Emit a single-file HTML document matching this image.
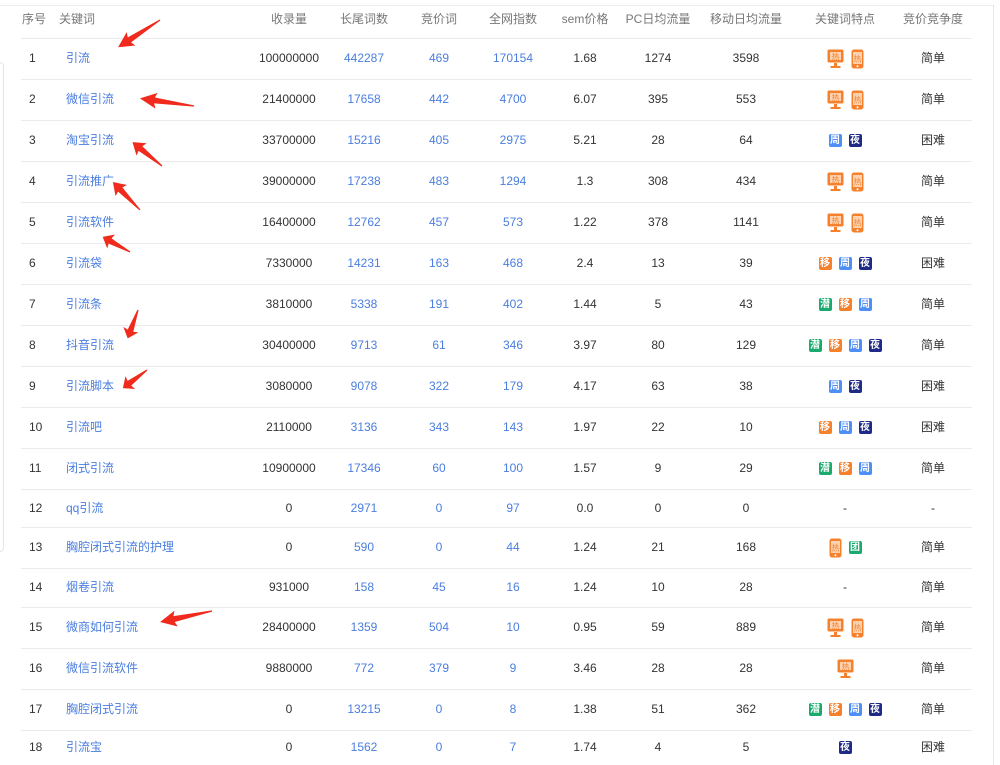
<!DOCTYPE html>
<html><head><meta charset="utf-8"><style>
body{margin:0;width:1000px;height:765px;background:#fff;position:relative;overflow:hidden;font-family:"Liberation Sans","Noto Sans CJK SC",sans-serif;font-size:12px;color:#333}
.top{position:absolute;left:0;top:5px;width:993px;height:1px;background:#ececec}
.rv{position:absolute;left:993px;top:5px;width:1px;height:760px;background:#e6e6e6}
.lp{position:absolute;left:-6px;top:62px;width:8px;height:488px;border:1px solid #e4e4e4;border-radius:4px}
.ln{position:absolute;left:21px;width:951px;height:1px;background:#ebebeb}
.r{position:absolute;left:0;width:1000px}
.c{position:absolute;top:0;height:100%;width:110px;text-align:center;white-space:nowrap}
.s{left:29px;text-align:left}
.k{left:66px;text-align:left;color:#4a7ee0;width:200px}
.b{color:#4a7ee0}
.h{color:#777}
.ic{display:flex;justify-content:center;align-items:center;gap:7px;height:100%;line-height:normal}
.ic svg{display:block}
.bd{display:inline-block;width:13px;height:13px;border-radius:2px;color:#fff;font-size:10px;font-weight:bold;line-height:13px;text-align:center}
.g{background:#1aaa6d}.o{background:#f5812d}.u{background:#4e8ef7}.n{background:#1f2a86}
</style></head><body>
<div class="top"></div><div class="rv"></div><div class="lp"></div>
<svg width="0" height="0" style="position:absolute"><defs>
<symbol id="mon" viewBox="0 0 17 20"><rect x="0.5" y="0.5" width="16" height="13" rx="1.5" fill="#f5812d"/><rect x="3" y="3" width="11" height="8" fill="#fbd3b3"/><text x="8.5" y="10.5" font-size="8" text-anchor="middle" fill="#f5812d" font-family="Noto Sans CJK SC">热</text><rect x="7" y="14" width="3" height="3" fill="#f5812d"/><rect x="3.5" y="17" width="10" height="2" fill="#f5812d"/></symbol>
<symbol id="ph" viewBox="0 0 13 20"><rect x="0.5" y="0.5" width="12" height="19" rx="2.5" fill="#f5812d"/><rect x="2" y="3" width="9" height="12" fill="#fbd3b3"/><text x="6.5" y="12.5" font-size="8" text-anchor="middle" fill="#f5812d" font-family="Noto Sans CJK SC">热</text><circle cx="6.5" cy="17.3" r="1" fill="#fff"/></symbol>
</defs></svg>
<div id="t"></div>
<script>
var H=[5,38,79,120,161,202,243,284,325,366,407,448,489,527,568,607,648,689,730,765];
var cx=[289,364,439,513,585,658,746,845,933];
var M='<svg width="17" height="20"><use href="#mon"/></svg>',P='<svg width="13" height="20"><use href="#ph"/></svg>';
function B(c,t){return '<span class="bd '+c+'">'+t+'</span>'}
var HP=M+P,ZY=B('u','周')+B('n','夜'),YZY=B('o','移')+B('u','周')+B('n','夜'),QYZ=B('g','潜')+B('o','移')+B('u','周'),ALL=B('g','潜')+B('o','移')+B('u','周')+B('n','夜');
var D=[
['1','引流','100000000','442287','469','170154','1.68','1274','3598',HP,'简单'],
['2','微信引流','21400000','17658','442','4700','6.07','395','553',HP,'简单'],
['3','淘宝引流','33700000','15216','405','2975','5.21','28','64',ZY,'困难'],
['4','引流推广','39000000','17238','483','1294','1.3','308','434',HP,'简单'],
['5','引流软件','16400000','12762','457','573','1.22','378','1141',HP,'简单'],
['6','引流袋','7330000','14231','163','468','2.4','13','39',YZY,'困难'],
['7','引流条','3810000','5338','191','402','1.44','5','43',QYZ,'简单'],
['8','抖音引流','30400000','9713','61','346','3.97','80','129',ALL,'简单'],
['9','引流脚本','3080000','9078','322','179','4.17','63','38',ZY,'困难'],
['10','引流吧','2110000','3136','343','143','1.97','22','10',YZY,'困难'],
['11','闭式引流','10900000','17346','60','100','1.57','9','29',QYZ,'简单'],
['12','qq引流','0','2971','0','97','0.0','0','0','-','-'],
['13','胸腔闭式引流的护理','0','590','0','44','1.24','21','168',P+B('g','团'),'简单'],
['14','烟卷引流','931000','158','45','16','1.24','10','28','-','简单'],
['15','微商如何引流','28400000','1359','504','10','0.95','59','889',HP,'简单'],
['16','微信引流软件','9880000','772','379','9','3.46','28','28',M,'简单'],
['17','胸腔闭式引流','0','13215','0','8','1.38','51','362',ALL,'简单'],
['18','引流宝','0','1562','0','7','1.74','4','5',B('n','夜'),'困难']];
var hdr=['序号','关键词','收录量','长尾词数','竞价词','全网指数','sem价格','PC日均流量','移动日均流量','关键词特点','竞价竞争度'];
var o='';
function row(top,h,cells,isH){
 var s='<div class="r" style="top:'+top+'px;height:'+h+'px;line-height:'+h+'px">';
 s+='<div class="c s'+(isH?' h':'')+'" style="'+(isH?'left:22px':'')+'">'+cells[0]+'</div>';
 s+='<div class="c '+(isH?'h':'k')+'" style="left:'+(isH?59:66)+'px;text-align:left">'+cells[1]+'</div>';
 for(var i=0;i<9;i++){var cls=isH?'h':((i>=1&&i<=3)?'b':'');
  var inner=(!isH&&i==7&&cells[9]!='-')?'<div class="ic">'+cells[9]+'</div>':cells[2+i];
  s+='<div class="c '+cls+'" style="left:'+(cx[i]-55)+'px">'+inner+'</div>';}
 return s+'</div>';}
o+=row(5,28,hdr,true);
for(var r=0;r<18;r++){o+='<div class="ln" style="top:'+H[r+1]+'px"></div>';o+=row(H[r+1],H[r+2]-H[r+1],D[r],false);}
document.getElementById('t').innerHTML=o;
</script>
<svg style="position:absolute;left:0;top:0" width="1000" height="765">
<defs><polygon id="ar" points="0,-0.6 38,-3 36,-8 52,0 36,8 38,3 0,0.6" fill="#f02a1c"/></defs>
<g transform="translate(160,20) rotate(147)"><use href="#ar" transform="scale(0.96,1)"/></g>
<g transform="translate(194,106) rotate(188)"><use href="#ar" transform="scale(1.05,1)"/></g>
<g transform="translate(162,166) rotate(219)"><use href="#ar" transform="scale(0.73,1)"/></g>
<g transform="translate(140,210) rotate(226)"><use href="#ar" transform="scale(0.75,1)"/></g>
<g transform="translate(130,252) rotate(209)"><use href="#ar" transform="scale(0.6,1)"/></g>
<g transform="translate(138,310) rotate(110)"><use href="#ar" transform="scale(0.58,1)"/></g>
<g transform="translate(147,370) rotate(143)"><use href="#ar" transform="scale(0.58,1)"/></g>
<g transform="translate(212,611) rotate(168)"><use href="#ar" transform="scale(1.02,1)"/></g>
</svg>
</body></html>
